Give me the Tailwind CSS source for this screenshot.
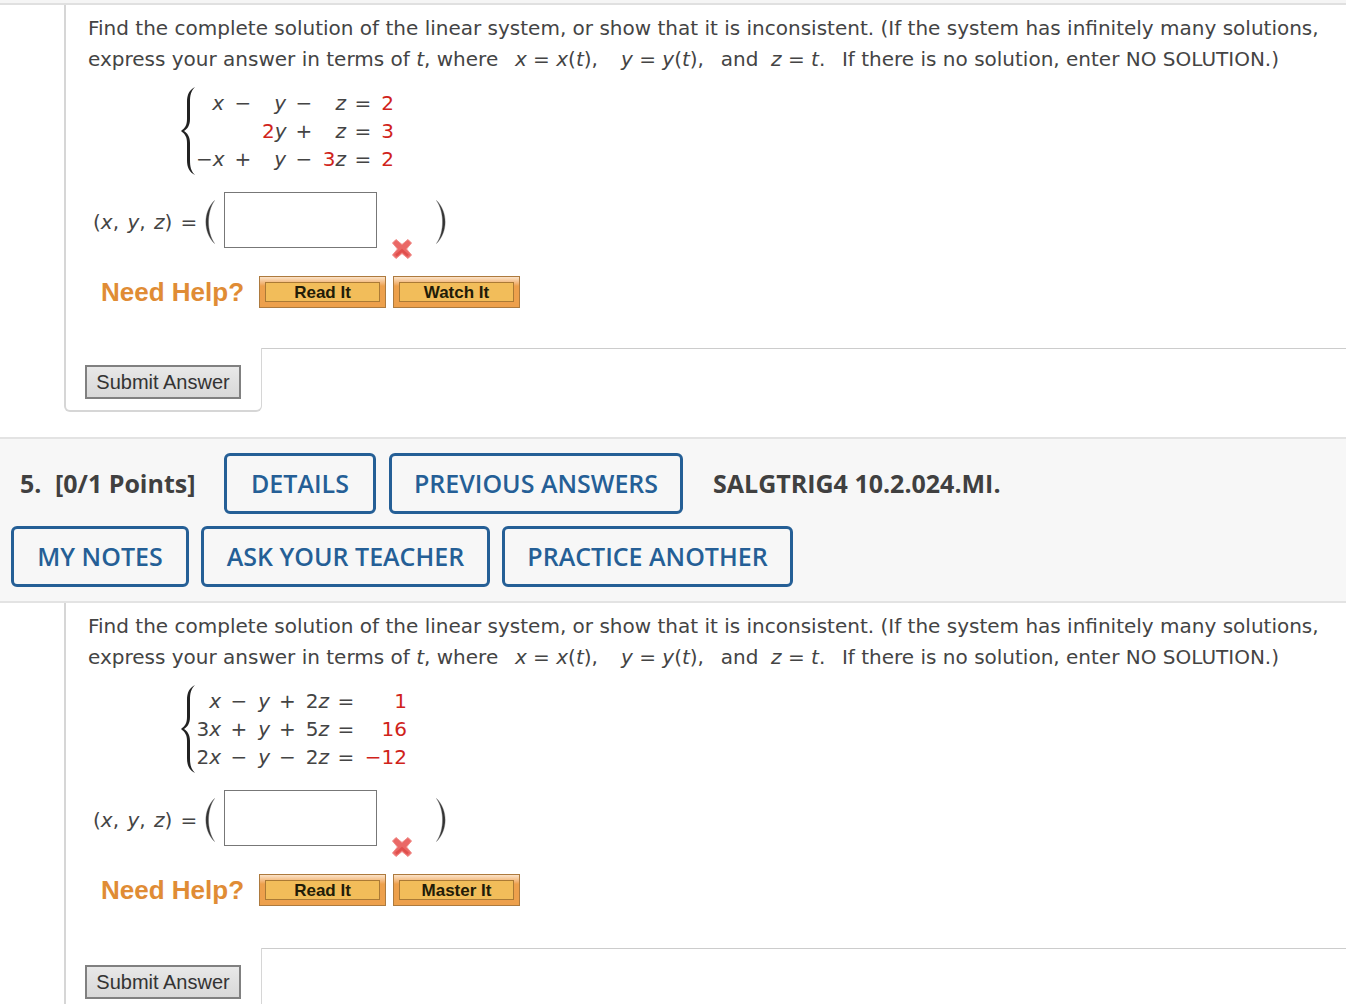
<!DOCTYPE html>
<html lang="en">
<head>
  <meta charset="UTF-8">
  <meta name="viewport" content="width=device-width, initial-scale=1.0">
  <title>Linear Systems</title>
  <script src="https://cdn.jsdelivr.net/npm/@tailwindcss/browser@4"></script>
</head>
<body class="bg-white text-[#444] font-[Verdana,'DejaVu_Sans',sans-serif] text-[20px] overflow-x-hidden">
  <!-- Shared shapes -->
  <svg class="hidden">
    <symbol id="brace" viewBox="0 0 14 88">
      <path d="M14 0C8 3 6 8 6 15V32C6 38 4 41 0 44C4 47 6 50 6 56V73C6 80 8 85 14 88C10 84 9 80 9 73V56C9 49 6 46 3 44C6 42 9 39 9 32V15C9 8 10 4 14 0Z" fill="#222"/>
    </symbol>
    <symbol id="paren" viewBox="0 0 10 44">
      <path d="M9.500 0.500C-2 12 -2 32 9.500 43.500C1.500 32 1.500 12 9.500 0.500Z" fill="#333" stroke="#666" stroke-width="0.4"/>
    </symbol>
    <symbol id="wrong" viewBox="0 0 20 20">
      <path d="M4 0.500L10 5.500L16 0.500L19.500 4L14.500 10L19.500 16L16 19.500L10 14.500L4 19.500L0.500 16L5.500 10L0.500 4Z" fill="#ea6866" stroke="#f08a86" stroke-width="1" stroke-linejoin="round"/>
      <path d="M4 16.500L10 11.500L16 16.500" fill="none" stroke="#e04f4c" stroke-width="2.500"/>
    </symbol>
  </svg>

  <div class="h-[5px] bg-[#f5f5f5] border-b-2 border-[#e0e0e0]"></div>

  <!-- Question 4 -->
  <main>
    <section class="ml-16">
      <div class="border-l-2 border-[#d6d6d6] pl-[22px] pt-2 h-[343px]">
        <p class="leading-[31px] whitespace-nowrap">Find the complete solution of the linear system, or show that it is inconsistent. (If the system has infinitely many solutions,<br>express your answer in terms of <i>t</i>, where&nbsp; <span class="ml-1"><i>x</i> = <i>x</i>(<i>t</i>),</span>&nbsp;&nbsp; <span class="ml-1"><i>y</i> = <i>y</i>(<i>t</i>),</span>&nbsp; <span class="ml-1">and</span>&nbsp; <i>z</i> = <i>t</i>.&nbsp; <span class="ml-1">If there is no solution, enter NO SOLUTION.)</span></p>
        <div class="flex items-center mt-3 ml-[93px]">
          <svg class="w-[14px] h-[88px]"><use href="#brace"/></svg>
          <table class="table-fixed w-[198px] ml-[1px] leading-[28px] text-right">
            <colgroup><col class="w-[28px]"><col class="w-[38px]"><col class="w-[24px]"><col class="w-[36px]"><col class="w-[24px]"><col class="w-[34px]"><col class="w-[14px]"></colgroup>
            <tr><td><i>x</i></td><td class="text-center">−</td><td><i>y</i></td><td class="text-center">−</td><td><i>z</i></td><td class="text-center">=</td><td class="text-[#d0231a]">2</td></tr>
            <tr><td></td><td></td><td><span class="text-[#d0231a]">2</span><i>y</i></td><td class="text-center">+</td><td><i>z</i></td><td class="text-center">=</td><td class="text-[#d0231a]">3</td></tr>
            <tr><td>−<i>x</i></td><td class="text-center">+</td><td><i>y</i></td><td class="text-center">−</td><td><span class="text-[#d0231a]">3</span><i>z</i></td><td class="text-center">=</td><td class="text-[#d0231a]">2</td></tr>
          </table>
        </div>
        <div class="flex items-center mt-[17px] ml-[5px] h-[56px]">
          <label for="answer4" class="w-[112px] whitespace-nowrap pt-1">(<i>x</i>, <i class="ml-[2px]">y</i>, <i class="ml-[2px]">z</i>) <span class="ml-[2px]">=</span></label>
          <svg class="w-[10px] h-[44px] mt-1"><use href="#paren"/></svg>
          <input id="answer4" type="text" class="w-[153px] h-[56px] ml-[9px] px-2 border border-[#777] bg-white">
          <svg class="w-5 h-5 ml-[15px] self-end translate-y-[11px]"><use href="#wrong"/></svg>
          <svg class="w-[10px] h-[44px] ml-6 mt-1 -scale-x-100"><use href="#paren"/></svg>
        </div>
        <div class="flex items-center mt-7 ml-[13px] font-['Liberation_Sans',Arial,sans-serif] font-bold">
          <span class="w-[158px] text-[26px] leading-8 text-[#e08c35]">Need Help?</span>
          <button class="w-[127px] h-8 p-[5px] border border-[#ad7a3e] bg-linear-to-b from-[#fbe3c8] from-0% via-[#eda04c] via-30% to-[#eda04c] text-[#221c08] text-[17px]"><span class="flex h-full items-center justify-center border border-[#ab7a35] bg-[#f2bd5a] pt-[2px]">Read It</span></button>
          <button class="w-[127px] h-8 ml-[7px] p-[5px] border border-[#ad7a3e] bg-linear-to-b from-[#fbe3c8] from-0% via-[#eda04c] via-30% to-[#eda04c] text-[#221c08] text-[17px]"><span class="flex h-full items-center justify-center border border-[#ab7a35] bg-[#f2bd5a] pt-[2px]">Watch It</span></button>
        </div>
      </div>
      <div class="flex">
        <div class="w-[198px] h-16 border-l-2 border-b-2 border-r border-[#d6d6d6] rounded-b-md pl-[19px] pt-[17px]">
          <button class="w-[156px] h-[34px] border-2 border-[#808080] bg-linear-to-b from-[#e8e8e8] to-[#d8d8d8] font-['Liberation_Sans',Arial,sans-serif] text-[20px] leading-[30px] text-[#333] whitespace-nowrap">Submit Answer</button>
        </div>
        <div class="flex-1 border-t border-[#ccc]"></div>
      </div>
    </section>

    <!-- Question 5 -->
    <header class="mt-[25px] h-[166px] pt-[14px] pl-[11px] bg-[#f7f7f7] border-y-2 border-[#e3e3e3] font-['Open_Sans',sans-serif] text-[25px] font-semibold text-[#255f96]">
      <div class="flex items-center">
        <span class="w-11 pl-[9px] font-bold text-[#404040]">5.</span>
        <span class="w-[169px] font-bold text-[#404040] whitespace-nowrap">[0/1 Points]</span>
        <button class="w-[152px] h-[61px] border-3 border-[#255f96] rounded-md">DETAILS</button>
        <button class="w-[294px] h-[61px] ml-[13px] border-3 border-[#255f96] rounded-md">PREVIOUS ANSWERS</button>
        <span class="ml-[30px] font-bold text-[#404040]">SALGTRIG4 10.2.024.MI.</span>
      </div>
      <div class="flex mt-3 gap-3">
        <button class="w-[178px] h-[61px] border-3 border-[#255f96] rounded-md">MY NOTES</button>
        <button class="w-[289px] h-[61px] border-3 border-[#255f96] rounded-md">ASK YOUR TEACHER</button>
        <button class="w-[291px] h-[61px] border-3 border-[#255f96] rounded-md">PRACTICE ANOTHER</button>
      </div>
    </header>

    <section class="ml-16">
      <div class="border-l-2 border-[#d6d6d6] pl-[22px] pt-2 h-[345px]">
        <p class="leading-[31px] whitespace-nowrap">Find the complete solution of the linear system, or show that it is inconsistent. (If the system has infinitely many solutions,<br>express your answer in terms of <i>t</i>, where&nbsp; <span class="ml-1"><i>x</i> = <i>x</i>(<i>t</i>),</span>&nbsp;&nbsp; <span class="ml-1"><i>y</i> = <i>y</i>(<i>t</i>),</span>&nbsp; <span class="ml-1">and</span>&nbsp; <i>z</i> = <i>t</i>.&nbsp; <span class="ml-1">If there is no solution, enter NO SOLUTION.)</span></p>
        <div class="flex items-center mt-3 ml-[93px]">
          <svg class="w-[14px] h-[88px]"><use href="#brace"/></svg>
          <table class="table-fixed w-[211px] ml-[1px] leading-[28px] text-right">
            <colgroup><col class="w-[25px]"><col class="w-[36px]"><col class="w-[13px]"><col class="w-[35px]"><col class="w-[24px]"><col class="w-[34px]"><col class="w-[44px]"></colgroup>
            <tr><td><i>x</i></td><td class="text-center">−</td><td><i>y</i></td><td class="text-center">+</td><td>2<i>z</i></td><td class="text-center">=</td><td class="text-[#d0231a]">1</td></tr>
            <tr><td>3<i>x</i></td><td class="text-center">+</td><td><i>y</i></td><td class="text-center">+</td><td>5<i>z</i></td><td class="text-center">=</td><td class="text-[#d0231a]">16</td></tr>
            <tr><td>2<i>x</i></td><td class="text-center">−</td><td><i>y</i></td><td class="text-center">−</td><td>2<i>z</i></td><td class="text-center">=</td><td class="text-[#d0231a]">−12</td></tr>
          </table>
        </div>
        <div class="flex items-center mt-[17px] ml-[5px] h-[56px]">
          <label for="answer5" class="w-[112px] whitespace-nowrap pt-1">(<i>x</i>, <i class="ml-[2px]">y</i>, <i class="ml-[2px]">z</i>) <span class="ml-[2px]">=</span></label>
          <svg class="w-[10px] h-[44px] mt-1"><use href="#paren"/></svg>
          <input id="answer5" type="text" class="w-[153px] h-[56px] ml-[9px] px-2 border border-[#777] bg-white">
          <svg class="w-5 h-5 ml-[15px] self-end translate-y-[11px]"><use href="#wrong"/></svg>
          <svg class="w-[10px] h-[44px] ml-6 mt-1 -scale-x-100"><use href="#paren"/></svg>
        </div>
        <div class="flex items-center mt-7 ml-[13px] font-['Liberation_Sans',Arial,sans-serif] font-bold">
          <span class="w-[158px] text-[26px] leading-8 text-[#e08c35]">Need Help?</span>
          <button class="w-[127px] h-8 p-[5px] border border-[#ad7a3e] bg-linear-to-b from-[#fbe3c8] from-0% via-[#eda04c] via-30% to-[#eda04c] text-[#221c08] text-[17px]"><span class="flex h-full items-center justify-center border border-[#ab7a35] bg-[#f2bd5a] pt-[2px]">Read It</span></button>
          <button class="w-[127px] h-8 ml-[7px] p-[5px] border border-[#ad7a3e] bg-linear-to-b from-[#fbe3c8] from-0% via-[#eda04c] via-30% to-[#eda04c] text-[#221c08] text-[17px]"><span class="flex h-full items-center justify-center border border-[#ab7a35] bg-[#f2bd5a] pt-[2px]">Master It</span></button>
        </div>
      </div>
      <div class="flex">
        <div class="w-[198px] h-[56px] border-l-2 border-r border-[#d6d6d6] pl-[19px] pt-[17px]">
          <button class="w-[156px] h-[34px] border-2 border-[#808080] bg-linear-to-b from-[#e8e8e8] to-[#d8d8d8] font-['Liberation_Sans',Arial,sans-serif] text-[20px] leading-[30px] text-[#333] whitespace-nowrap">Submit Answer</button>
        </div>
        <div class="flex-1 border-t border-[#ccc]"></div>
      </div>
    </section>
  </main>
</body>
</html>
